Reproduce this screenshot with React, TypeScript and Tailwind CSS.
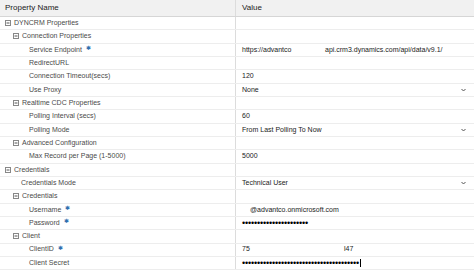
import React from "react";

type Row = {
  label: string;
  level: 0 | 1 | 2;
  group?: boolean;
  required?: boolean;
  value?: React.ReactNode;
  select?: boolean;
};

const Dots = ({ n, cursor }: { n: number; cursor?: boolean }) => (
  <span className="flex items-center">
    <span className="text-[9px] leading-none tracking-[-0.15px] text-black">{"•".repeat(n)}</span>
    {cursor && <span className="ml-[1px] h-[8px] w-[1px] bg-black" />}
  </span>
);

const ROWS: Row[] = [
  { label: "DYNCRM Properties", level: 0, group: true },
  { label: "Connection Properties", level: 1, group: true },
  {
    label: "Service Endpoint",
    level: 2,
    required: true,
    value: (
      <span className="flex">
        <span className="w-[83px]">https://advantco</span>
        <span>api.crm3.dynamics.com/api/data/v9.1/</span>
      </span>
    ),
  },
  { label: "RedirectURL", level: 2 },
  { label: "Connection Timeout(secs)", level: 2, value: "120" },
  { label: "Use Proxy", level: 2, value: "None", select: true },
  { label: "Realtime CDC Properties", level: 1, group: true },
  { label: "Polling Interval (secs)", level: 2, value: "60" },
  { label: "Polling Mode", level: 2, value: "From Last Polling To Now", select: true },
  { label: "Advanced Configuration", level: 1, group: true },
  { label: "Max Record per Page (1-5000)", level: 2, value: "5000" },
  { label: "Credentials", level: 0, group: true },
  { label: "Credentials Mode", level: 1, value: "Technical User", select: true },
  { label: "Credentials", level: 1, group: true },
  { label: "Username", level: 2, required: true, value: <span className="pl-[8px]">@advantco.onmicrosoft.com</span> },
  { label: "Password", level: 2, required: true, value: <Dots n={22} /> },
  { label: "Client", level: 1, group: true },
  {
    label: "ClientID",
    level: 2,
    required: true,
    value: (
      <span className="flex">
        <span className="w-[102px]">75</span>
        <span>l47</span>
      </span>
    ),
  },
  { label: "Client Secret", level: 2, value: <Dots n={39} cursor /> },
];

const Minus = () => (
  <svg width="6" height="6" viewBox="0 0 6 6" className="mr-[1px] shrink-0">
    <rect x="0.5" y="0.5" width="5" height="5" fill="none" stroke="#888" strokeWidth="1" />
    <line x1="1.5" y1="3" x2="4.5" y2="3" stroke="#555" strokeWidth="1" />
  </svg>
);

const Chevron = () => (
  <svg width="5" height="4" viewBox="0 0 5 4" className="shrink-0">
    <path d="M0.5 1 L2.5 3 L4.5 1" fill="none" stroke="#555" strokeWidth="1" />
  </svg>
);

export default function App() {
  const indent = ["pl-[5px]", "pl-[13px]", "pl-[29px]"];
  const textIndent = ["pl-[21px]", "pl-[21px]", "pl-[29px]"];
  return (
    <div className="h-[270px] w-[474px] overflow-hidden bg-white font-['Liberation_Sans',Arial,sans-serif] text-[7px] text-[#333]">
      <div className="flex h-[17px] items-center border-b border-[#d6d6d6] bg-[#f1f1f1] text-[8px] text-[#222]">
        <div className="flex h-full w-[236px] items-center border-r border-[#dcdcdc] pl-[5px]">Property Name</div>
        <div className="pl-[6px]">Value</div>
      </div>
      {ROWS.map((r, i) => (
        <div key={i} className="flex h-[13.33px] items-center border-b border-[#ededed]">
          <div
            className={`flex h-full w-[236px] items-center gap-[1px] border-r border-[#dcdcdc] text-[#4a4a4a] ${
              r.group ? indent[r.level] : textIndent[r.level]
            }`}
          >
            {r.group && <Minus />}
            <span className={r.group ? "pl-[1px]" : ""}>{r.label}</span>
            {r.required && <span className="mb-[4px] ml-[3px] text-[6px] leading-none text-[#2f6fae]">✱</span>}
          </div>
          <div className="flex h-full flex-1 items-center justify-between pl-[6px] pr-[8px] text-[#222]">
            <span className="flex items-center">{r.value}</span>
            {r.select && <Chevron />}
          </div>
        </div>
      ))}
    </div>
  );
}
